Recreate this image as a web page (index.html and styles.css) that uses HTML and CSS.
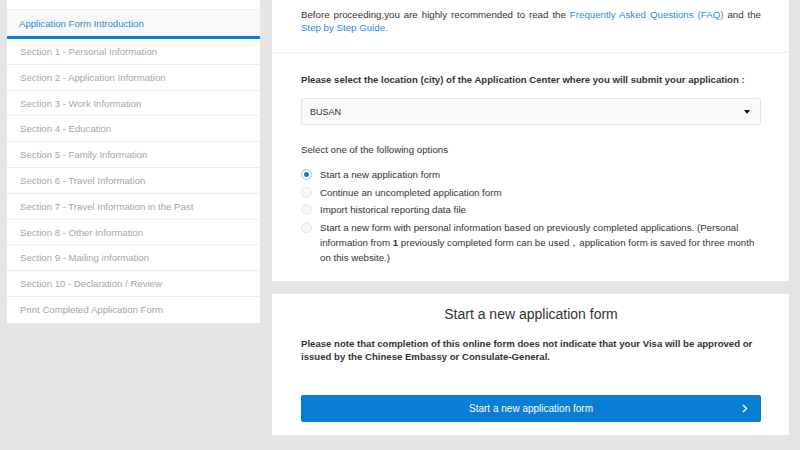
FILE: index.html
```html
<!DOCTYPE html>
<html>
<head>
<meta charset="utf-8">
<link rel="stylesheet" href="styles.css">
</head>
<body>
<div class="page">
  <aside class="sidebar">
    <div class="side-top"></div>
    <div class="side-item active">Application Form Introduction</div>
    <div class="side-item">Section 1 - Personal Information</div>
    <div class="side-item">Section 2 - Application Information</div>
    <div class="side-item">Section 3 - Work Information</div>
    <div class="side-item">Section 4 - Education</div>
    <div class="side-item">Section 5 - Family Information</div>
    <div class="side-item">Section 6 - Travel Information</div>
    <div class="side-item">Section 7 - Travel Information in the Past</div>
    <div class="side-item">Section 8 - Other Information</div>
    <div class="side-item">Section 9 - Mailing information</div>
    <div class="side-item">Section 10 - Declaration / Review</div>
    <div class="side-item last">Print Completed Application Form</div>
  </aside>
  <main class="main">
    <section class="card card-top">
      <div class="intro">Before proceeding,you are highly recommended to read the <span class="link">Frequently Asked Questions (FAQ)</span> and the <span class="link">Step by Step Guide.</span></div>
      <div class="form-part">
        <div class="label">Please select the location (city) of the Application Center where you will submit your application :</div>
        <div class="select"><span>BUSAN</span><span class="caret"></span></div>
        <div class="opts-title">Select one of the following options</div>
        <div class="options">
          <div class="opt"><span class="radio checked"></span><span class="opt-text">Start a new application form</span></div>
          <div class="opt"><span class="radio"></span><span class="opt-text">Continue an uncompleted application form</span></div>
          <div class="opt"><span class="radio"></span><span class="opt-text">Import historical reporting data file</span></div>
          <div class="opt"><span class="radio"></span><span class="opt-text">Start a new form with personal information based on previously completed applications. (Personal information from <b class="num">1</b> previously completed form can be used，application form is saved for three month on this website.)</span></div>
        </div>
      </div>
    </section>
    <section class="card card-bottom">
      <h2 class="title">Start a new application form</h2>
      <p class="note">Please note that completion of this online form does not indicate that your Visa will be approved or issued by the Chinese Embassy or Consulate-General.</p>
      <div class="btn"><span>Start a new application form</span>
        <svg class="chev" width="6" height="9" viewBox="0 0 6 9"><polyline points="1,1 4.5,4.5 1,8" fill="none" stroke="#fff" stroke-width="1.4"/></svg>
      </div>
    </section>
  </main>
</div>
</body>
</html>
```

FILE: styles.css
```css
* { box-sizing: border-box; }
html, body { margin: 0; padding: 0; }
body {
  background: #e5e5e5;
  font-family: "Liberation Sans", Arial, sans-serif;
  color: #333;
  font-size: 9.7px;
  width: 800px;
  height: 450px;
  overflow: hidden;
}
.page {
  display: flex;
  align-items: flex-start;
  padding-left: 7px;
  gap: 12px;
}
.sidebar {
  width: 253px;
  background: #fff;
  display: flex;
  flex-direction: column;
}
.side-top { height: 10px; background: #fff; border-bottom: 1px solid #f0f0f0; }
.side-item {
  height: 25.8px;
  line-height: 25px;
  padding-left: 13px;
  color: #a6a6a6;
  font-size: 9.6px;
  border-bottom: 1px solid #ececec;
  white-space: nowrap;
}
.side-item.active {
  height: 29px;
  line-height: 27px;
  padding-left: 12px;
  background: #f8f8f8;
  color: #2a8ce0;
  border-bottom: 3px solid #0a7fd8;
}
.side-item.last { border-bottom: none; }
.main {
  width: 517px;
  display: flex;
  flex-direction: column;
  gap: 13px;
}
.card { background: #fff; }
.card-top { height: 281px; }
.intro {
  padding: 8px 28px 0 29px;
  height: 53px;
  line-height: 13px;
  text-align: justify;
  border-bottom: 1px solid #eeeeee;
}
.link { color: #2a8ce0; }
.form-part { padding: 20px 28px 0 29px; }
.label { font-weight: bold; line-height: 13px; font-size: 9.6px; }
.select {
  margin-top: 12px;
  height: 27px;
  background: #f9f9f9;
  border: 1px solid #e6e6e6;
  border-radius: 2px;
  display: flex;
  align-items: center;
  justify-content: space-between;
  padding: 0 10px 0 8px;
  font-size: 9px;
  color: #333;
}
.caret {
  width: 0; height: 0;
  border-left: 3.5px solid transparent;
  border-right: 3.5px solid transparent;
  border-top: 4px solid #111;
}
.opts-title { margin-top: 18px; line-height: 13px; }
.options { margin-top: 11px; display: flex; flex-direction: column; gap: 2.5px; }
.opt { display: flex; align-items: flex-start; line-height: 15px; }
.radio {
  flex: none;
  width: 11px; height: 11px;
  border-radius: 50%;
  border: 1px solid #e4e4e4;
  background: #f7f7f7;
  margin-top: 2px;
  margin-right: 8px;
  position: relative;
}
.radio.checked { border-color: #9cc6ef; background: #fff; }
.radio.checked::after {
  content: "";
  position: absolute;
  left: 2px; top: 2px;
  width: 5px; height: 5px;
  border-radius: 50%;
  background: #1479d6;
}
.opt-text { flex: 1; }
.num { font-weight: bold; }
.card-bottom { height: 141px; padding: 0 28px 0 29px; }
.title {
  margin: 0;
  padding-top: 12px;
  font-size: 14px;
  font-weight: normal;
  text-align: center;
  line-height: 17px;
  color: #333;
}
.note {
  margin: 14px 0 0 0;
  font-weight: bold;
  font-size: 9.6px;
  line-height: 13px;
}
.btn {
  margin-top: 32px;
  height: 27px;
  background: #0a7ed4;
  border-radius: 2px;
  color: #fff;
  display: flex;
  align-items: center;
  justify-content: center;
  position: relative;
  font-size: 10px;
}
.chev { position: absolute; right: 13px; top: 9px; }
```
